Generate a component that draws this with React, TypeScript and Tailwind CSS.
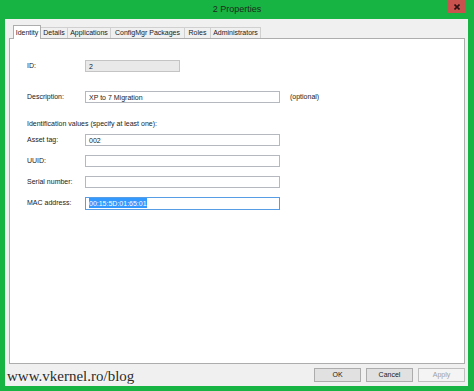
const tabs = [
  { label: 'Identity', w: 'w-[28px]', active: true },
  { label: 'Details', w: 'w-[27px]' },
  { label: 'Applications', w: 'w-[43px]' },
  { label: 'ConfigMgr Packages', w: 'w-[74px]' },
  { label: 'Roles', w: 'w-[26px]' },
  { label: 'Administrators', w: 'w-[50px]' },
];

function Field({ value, className = '' }: { value?: string; className?: string }) {
  return (
    <div className={`h-[12px] w-[195px] border border-[#b5b8be] bg-white pl-[3px] flex items-center leading-none ${className}`}>
      {value}
    </div>
  );
}

function Row({ label, children, className = '' }: { label: string; children: React.ReactNode; className?: string }) {
  return (
    <div className={`flex items-center h-[12px] ${className}`}>
      <span className="w-[58px] shrink-0">{label}</span>
      {children}
    </div>
  );
}

export default function App() {
  return (
    <div
      className="w-[474px] h-[391px] bg-[#17b444] flex flex-col text-[7px] text-[#1a1a1a]"
      style={{ fontFamily: '"Liberation Sans", Arial, sans-serif' }}
    >
      {/* title bar */}
      <div className="relative h-[19px] shrink-0 flex items-center justify-center">
        <span className="text-[9px] text-[#1c2b1c] pt-[1px]">2 Properties</span>
        <div className="absolute top-0 right-[8px] w-[18px] h-[13px] bg-[#c9524f] flex items-center justify-center">
          <svg width="6" height="6" viewBox="0 0 6 6">
            <path d="M0.5 0.5 L5.5 5.5 M5.5 0.5 L0.5 5.5" stroke="#2a1010" strokeWidth="1.6" />
          </svg>
        </div>
      </div>

      {/* client area */}
      <div className="flex-1 ml-[5px] mr-[6px] mb-[5px] bg-[#f0f0f0] flex flex-col">
        <div className="flex items-end pl-[8px] pt-[5px] h-[19px] shrink-0">
          {tabs.map((t) =>
            t.active ? (
              <div
                key={t.label}
                className={`${t.w} h-[14px] bg-white border border-b-0 border-[#adadad] flex items-start justify-center pt-[2px] relative z-10 -mb-[1px]`}
              >
                {t.label}
              </div>
            ) : (
              <div
                key={t.label}
                className={`${t.w} h-[11px] bg-[#f0f0f0] border border-l-0 border-b-0 border-[#d0d0d0] flex items-center justify-center`}
              >
                {t.label}
              </div>
            ),
          )}
        </div>

        {/* panel */}
        <div className="ml-[4px] mr-[3px] h-[326px] shrink-0 bg-white border border-[#adadad] pl-[17px] pt-[21px] flex flex-col">
          <Row label="ID:">
            <div className="h-[12px] w-[95px] border border-[#c4c4c4] bg-[#e9e9e9] pl-[3px] flex items-center leading-none">2</div>
          </Row>
          <Row label="Description:" className="mt-[19px]">
            <Field value="XP to 7 Migration" />
            <span className="ml-[10px]">(optional)</span>
          </Row>
          <div className="mt-[15px] h-[12px] flex items-center">Identification values (specify at least one):</div>
          <Row label="Asset tag:" className="mt-[4px]">
            <Field value="002" />
          </Row>
          <Row label="UUID:" className="mt-[9px]">
            <Field />
          </Row>
          <Row label="Serial number:" className="mt-[9px]">
            <Field />
          </Row>
          <Row label="MAC address:" className="mt-[9px]">
            <div className="h-[13px] w-[195px] border border-[#569de5] bg-white pl-[3px] flex items-center leading-none">
              <span className="bg-[#3399ff] text-white h-[10px] flex items-center">00:15:5D:01:65:01</span>
            </div>
          </Row>
        </div>

        {/* bottom bar */}
        <div className="flex-1 flex items-center justify-between pr-[3px]">
          <span
            className="text-[15px] text-[#2b2b2b] leading-none mt-[3px] ml-[2px]"
            style={{ fontFamily: '"Liberation Serif", "Times New Roman", serif', textShadow: '1px 1px 1px rgba(255,255,255,0.8)' }}
          >
            www.vkernel.ro/blog
          </span>
          <div className="flex gap-[5px]">
            <div className="w-[47px] h-[14px] border border-[#acacac] bg-[#e1e1e1] flex items-center justify-center">OK</div>
            <div className="w-[47px] h-[14px] border border-[#acacac] bg-[#e1e1e1] flex items-center justify-center">Cancel</div>
            <div className="w-[47px] h-[14px] border border-[#bfbfbf] bg-[#f4f4f4] text-[#a0a0a0] flex items-center justify-center">Apply</div>
          </div>
        </div>
      </div>
    </div>
  );
}
